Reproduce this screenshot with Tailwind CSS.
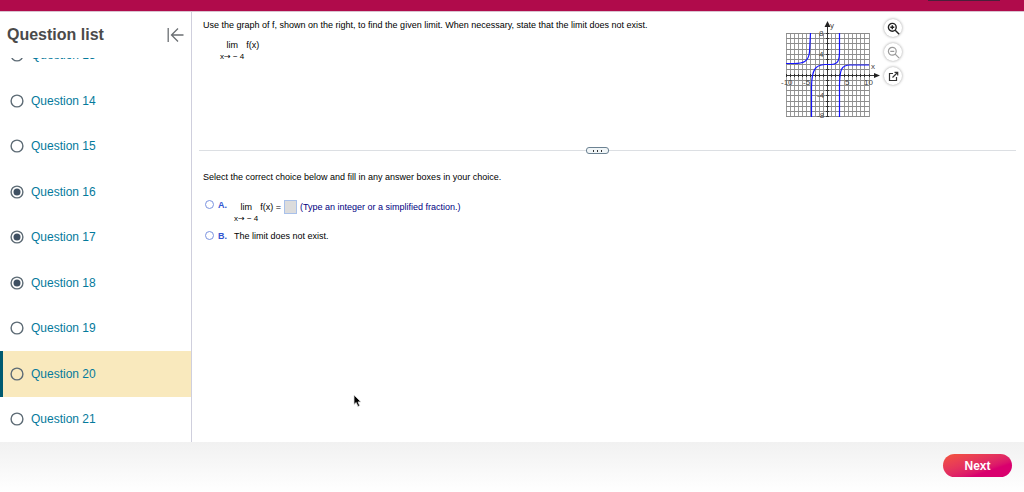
<!DOCTYPE html>
<html lang="en">
<head>
    <meta charset="UTF-8">
    <meta name="viewport" content="width=device-width, initial-scale=1.0">
    <title>Question list</title>
    <script src="https://cdn.jsdelivr.net/npm/@tailwindcss/browser@4"></script>
</head>
<body class="relative min-h-screen flex flex-col bg-white font-['Liberation_Sans',Arial,sans-serif] text-black">

    <!-- Top bar -->
    <header class="h-3 flex justify-end bg-[#b00b4b] border-b border-[#d9c3d0] pr-6">
        <div class="w-[72px] h-px bg-[#4a1f3a]"></div>
    </header>

    <div class="flex-1 flex">
        <!-- Question list -->
        <aside class="w-48 shrink-0 flex flex-col border-r border-[#cfcfdd]">
            <div class="h-[46px] flex items-center justify-between pl-[7px] pr-[7px]">
                <h1 class="text-[16px] font-bold text-[#4a4a4a]">Question list</h1>
                <button type="button" aria-label="Collapse question list">
                    <svg width="17" height="16" viewBox="0 0 17 16" fill="none" stroke="#6b6f73" stroke-width="1.3"><path d="M1.2 1v14M16.5 8H4.5M11 1.5L4.5 8l6.500 6.500"/></svg>
                </button>
            </div>
            <nav id="question-list" class="flex-1 flex flex-col text-[12px] text-[#047a9c]"></nav>
        </aside>

        <!-- Exercise -->
        <main class="flex-1 pl-[7px] pr-2 text-[9px] leading-3">
            <section class="h-[139px] flex justify-between border-b border-[#dcdfe3] pl-1">
                <div class="pt-[7px]">
                    <p>Use the graph of f, shown on the right, to find the given limit. When necessary, state that the limit does not exist.</p>
                    <div class="flex gap-[2px] pt-2 pl-[17px]">
                        <div class="text-center">
                            <div>lim</div>
                            <div class="text-[8px] leading-[11px]">x<span class="font-['DejaVu_Sans']">→</span> − 4</div>
                        </div>
                        <div>f(x)</div>
                    </div>
                </div>
                <div class="flex gap-1 pr-[114px]">
                    <svg id="graph" class="mt-2" width="100" height="100" viewBox="780 20 100 100" font-size="8" fill="#444"></svg>
                    <div class="flex flex-col gap-[6px] pt-[7px]">
                        <button type="button" aria-label="Zoom in" class="size-[18px] flex items-center justify-center rounded-full bg-white shadow-[0_0_3px_#999]">
                            <svg width="13" height="13" viewBox="0 0 13 13" fill="none" stroke="#222" stroke-width="1.400"><circle cx="5.300" cy="5.300" r="3.900"/><path d="M8.200 8.200l4 4M3.300 5.300h4M5.300 3.300v4"/></svg>
                        </button>
                        <button type="button" aria-label="Zoom out" class="size-[18px] flex items-center justify-center rounded-full bg-white shadow-[0_0_3px_#999]">
                            <svg width="13" height="13" viewBox="0 0 13 13" fill="none" stroke="#999" stroke-width="1.200"><circle cx="5.300" cy="5.300" r="3.900"/><path d="M8.200 8.200l4 4M3.300 5.300h4"/></svg>
                        </button>
                        <button type="button" aria-label="Open in new window" class="size-[18px] flex items-center justify-center rounded-full bg-white shadow-[0_0_3px_#999]">
                            <svg width="11" height="11" viewBox="0 0 11 11" fill="none" stroke="#333" stroke-width="1.200"><path d="M5 2.500H1.500v7h7V6M4.500 6.500l5-5M6.500 1.300h3.200v3.200"/></svg>
                        </button>
                    </div>
                </div>
            </section>

            <div class="flex justify-center -mt-[4px] pr-5">
                <button type="button" aria-label="Resize panes" class="w-[23px] h-[7px] flex items-center justify-center gap-[3px] rounded-[3px] border border-[#6c8292] bg-[#f1f6f8]">
                    <span class="w-px h-[2px] bg-[#333]"></span>
                    <span class="w-px h-[2px] bg-[#333]"></span>
                    <span class="w-px h-[2px] bg-[#333]"></span>
                </button>
            </div>

            <section class="pl-1 pt-[17px]">
                <p>Select the correct choice below and fill in any answer boxes in your choice.</p>
                <div class="flex items-start pt-4 pl-[2px]">
                    <input type="radio" id="choice-a" name="choice" class="appearance-none size-[9px] mt-px rounded-full border border-[#7b93e0] bg-white">
                    <label for="choice-a" class="w-5 pl-1 font-bold text-[#3355d1]">A.</label>
                    <div class="flex gap-[2px] pt-[2px]">
                        <div class="text-center">
                            <div>lim</div>
                            <div class="text-[8px] leading-[11px]">x<span class="font-['DejaVu_Sans']">→</span> − 4</div>
                        </div>
                        <div class="flex items-center gap-[3px] h-3">
                            <span>f(x) =</span>
                            <input type="text" aria-label="Answer" class="w-[13px] h-[14px] border border-[#a9c1ea] bg-[#dcdcdc]">
                            <span class="text-[#00007f]">(Type an integer or a simplified fraction.)</span>
                        </div>
                    </div>
                </div>
                <div class="flex items-start pt-[6px] pl-[2px]">
                    <input type="radio" id="choice-b" name="choice" class="appearance-none size-[9px] mt-px rounded-full border border-[#7b93e0] bg-white">
                    <label for="choice-b" class="w-5 pl-1 font-bold text-[#3355d1]">B.</label>
                    <span>The limit does not exist.</span>
                </div>
            </section>
        </main>
    </div>

    <!-- Footer -->
    <footer class="h-[50px] flex items-start justify-end pt-3 pr-3 bg-linear-to-b from-[#f1f1f1] to-white">
        <button type="button" class="w-[69px] h-[23px] rounded-full bg-linear-to-br from-[#f4543a] to-[#d9006e] to-70% text-white text-[12px] font-bold">Next</button>
    </footer>

    <!-- Mouse pointer -->
    <svg class="absolute left-[353px] top-[394px]" width="10" height="14" viewBox="0 0 10 14" fill="#000" stroke="#ddd" stroke-width="0.800"><path d="M1 1v9.500l2.200-2 1.700 4 1.800-.8-1.700-3.800h3z"/></svg>

    <script>
        const questions = [
            { number: 14, done: false },
            { number: 15, done: false },
            { number: 16, done: true },
            { number: 17, done: true },
            { number: 18, done: true },
            { number: 19, done: false },
            { number: 20, done: false, current: true },
            { number: 21, done: false }
        ];

        function statusIcon(done) {
            return `<svg width="14" height="14" viewBox="0 0 14 14" fill="none" stroke="#5d6b75" stroke-width="1.400">
                <circle cx="7" cy="7" r="5.900"/>${done ? '<circle cx="7" cy="7" r="3.500" fill="#3f5062" stroke="none"/>' : ''}</svg>`;
        }

        // Row scrolled halfway under the heading
        let rows = `<a href="#q13" class="h-5 overflow-hidden flex items-start pl-[10px] gap-[7px]">
            <span class="-mt-[10px]">${statusIcon(false)}</span><span class="-mt-[10px] leading-[14px]">Question 13</span></a>`;

        questions.forEach(q => {
            const state = q.current ? 'bg-[#f9e9bd] border-[#005a70]' : 'border-transparent';
            rows += `<a href="#q${q.number}" class="flex-1 flex items-center gap-[7px] pl-[7px] border-l-3 ${state}">
                ${statusIcon(q.done)}<span>Question ${q.number}</span></a>`;
        });
        document.getElementById('question-list').innerHTML = rows;

        // Graph, x from -10 to 10 and y from -8 to 8
        const px = x => 827.5 + x * 4.15;
        const py = y => 75 - y * 5.2;
        let columns = '';
        let lines = '';
        let ticks = '';
        for (let x = -10; x <= 10; x++) {
            columns += `M${Math.floor(px(x)) + 0.5} 33V117`;
            ticks += `M${Math.floor(px(x)) + 0.5} 74v3`;
        }
        for (let y = -8; y <= 8; y++) {
            lines += `M786 ${Math.floor(py(y)) + 0.5}H869`;
            ticks += `M826 ${Math.floor(py(y)) + 0.5}h3`;
        }
        document.getElementById('graph').innerHTML = `
            <path d="${columns}" stroke="#999" stroke-width="1"/>
            <path d="${lines}" stroke="#8c8c8c" stroke-width="1"/>
            <path d="${ticks}M786 75.500H876M827.500 117V25" stroke="#333" stroke-width="1"/>
            <path d="M880 75.500l-6-2.500v5zM827.500 21l-3 6h6z" fill="#222"/>
            <g fill="none" stroke="#1414ff" stroke-width="1.200">
                <path d="M786 63.500H794C803 63.500 808.500 62 809.500 52L810.500 33"/>
                <path d="M811.500 117V86C812 70 815 65 825 64.500H831C837 64 839.500 62 839.500 52V33"/>
                <path d="M839.500 117V84C840 70 841 65 850 65H869"/>
            </g>
            <text x="830" y="28">y</text>
            <text x="871" y="69">x</text>
            <text x="819" y="36">8</text>
            <text x="819" y="57">4</text>
            <text x="817" y="98">-4</text>
            <text x="817" y="118">-8</text>
            <text x="781" y="85">-10</text>
            <text x="803" y="85">-5</text>
            <text x="845" y="85">5</text>
            <text x="864" y="85">10</text>`;
    </script>
</body>
</html>
